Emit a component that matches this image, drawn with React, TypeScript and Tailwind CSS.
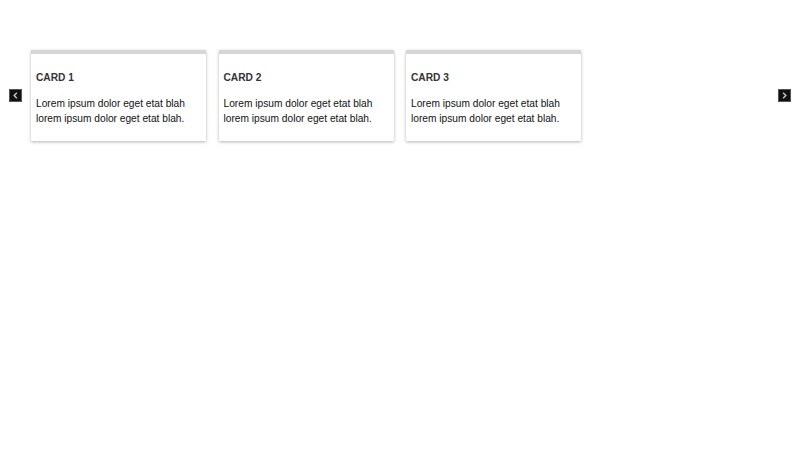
import React from "react";

const cards = ["CARD 1", "CARD 2", "CARD 3"];

function Arrow({ dir }: { dir: "left" | "right" }) {
  return (
    <div className="w-[13px] h-[13px] bg-[#111] border border-[#555] flex items-center justify-center">
      <svg width="9" height="9" viewBox="0 0 10 10">
        {dir === "left" ? (
          <path d="M6.5 2 L3.5 5 L6.5 8" stroke="#ccc" strokeWidth="1.5" fill="none" />
        ) : (
          <path d="M3.5 2 L6.5 5 L3.5 8" stroke="#ccc" strokeWidth="1.5" fill="none" />
        )}
      </svg>
    </div>
  );
}

export default function App() {
  return (
    <div
      className="w-[800px] h-[450px] bg-white pt-[50px]"
      style={{ fontFamily: '"Liberation Sans", Arial, sans-serif' }}
    >
      <div className="flex items-center">
        <div className="pl-[9px] w-[31px]">
          <Arrow dir="left" />
        </div>
        <div className="flex-1 flex gap-[12.5px]">
          {cards.map((c) => (
            <div
              key={c}
              className="w-[175px] border-t-[4px] border-[#d6d6d6] bg-white px-[5px] shadow-[0_1px_3px_rgba(0,0,0,0.3)]"
            >
              <div className="mt-[17px] text-[10.2px] leading-[14px] font-bold text-[#333]">{c}</div>
              <p className="mt-[11px] mb-[15px] text-[10.2px] leading-[15px] text-[#111]">
                Lorem ipsum dolor eget etat blah lorem ipsum dolor eget etat blah.
              </p>
            </div>
          ))}
        </div>
        <div className="pr-[9px]">
          <Arrow dir="right" />
        </div>
      </div>
    </div>
  );
}
